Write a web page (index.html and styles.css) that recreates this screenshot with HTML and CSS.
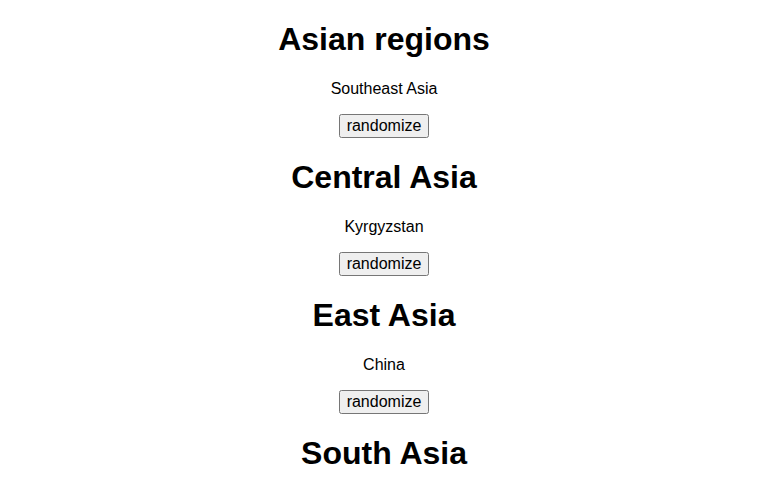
FILE: index.html
```html
<!DOCTYPE html>
<html lang="en">
<head>
  <meta charset="UTF-8" />
  <title>Asian regions</title>
  <link rel="stylesheet" href="styles.css">
</head>
<body>
<div class="app">
  <section class="region">
    <h1>Asian regions</h1>
    <p>Southeast Asia</p>
    <button class="randomize">randomize</button>
  </section>
  <section class="region">
    <h1>Central Asia</h1>
    <p>Kyrgyzstan</p>
    <button class="randomize">randomize</button>
  </section>
  <section class="region">
    <h1>East Asia</h1>
    <p>China</p>
    <button class="randomize">randomize</button>
  </section>
  <section class="region">
    <h1>South Asia</h1>
    <p>India</p>
    <button class="randomize">randomize</button>
  </section>
</div>
</body>
</html>
```

FILE: styles.css
```css
body {
  margin: 0;
  font-family: "Liberation Sans", Arial, sans-serif;
  color: #000;
  background: #fff;
}
.app {
  text-align: center;
}
.region h1 {
  font-size: 32px;
  margin: 21.44px 0;
}
.region p {
  font-size: 16px;
  margin: 16px 0;
}
.randomize {
  font-family: "Liberation Sans", Arial, sans-serif;
  font-size: 16px;
}
```
